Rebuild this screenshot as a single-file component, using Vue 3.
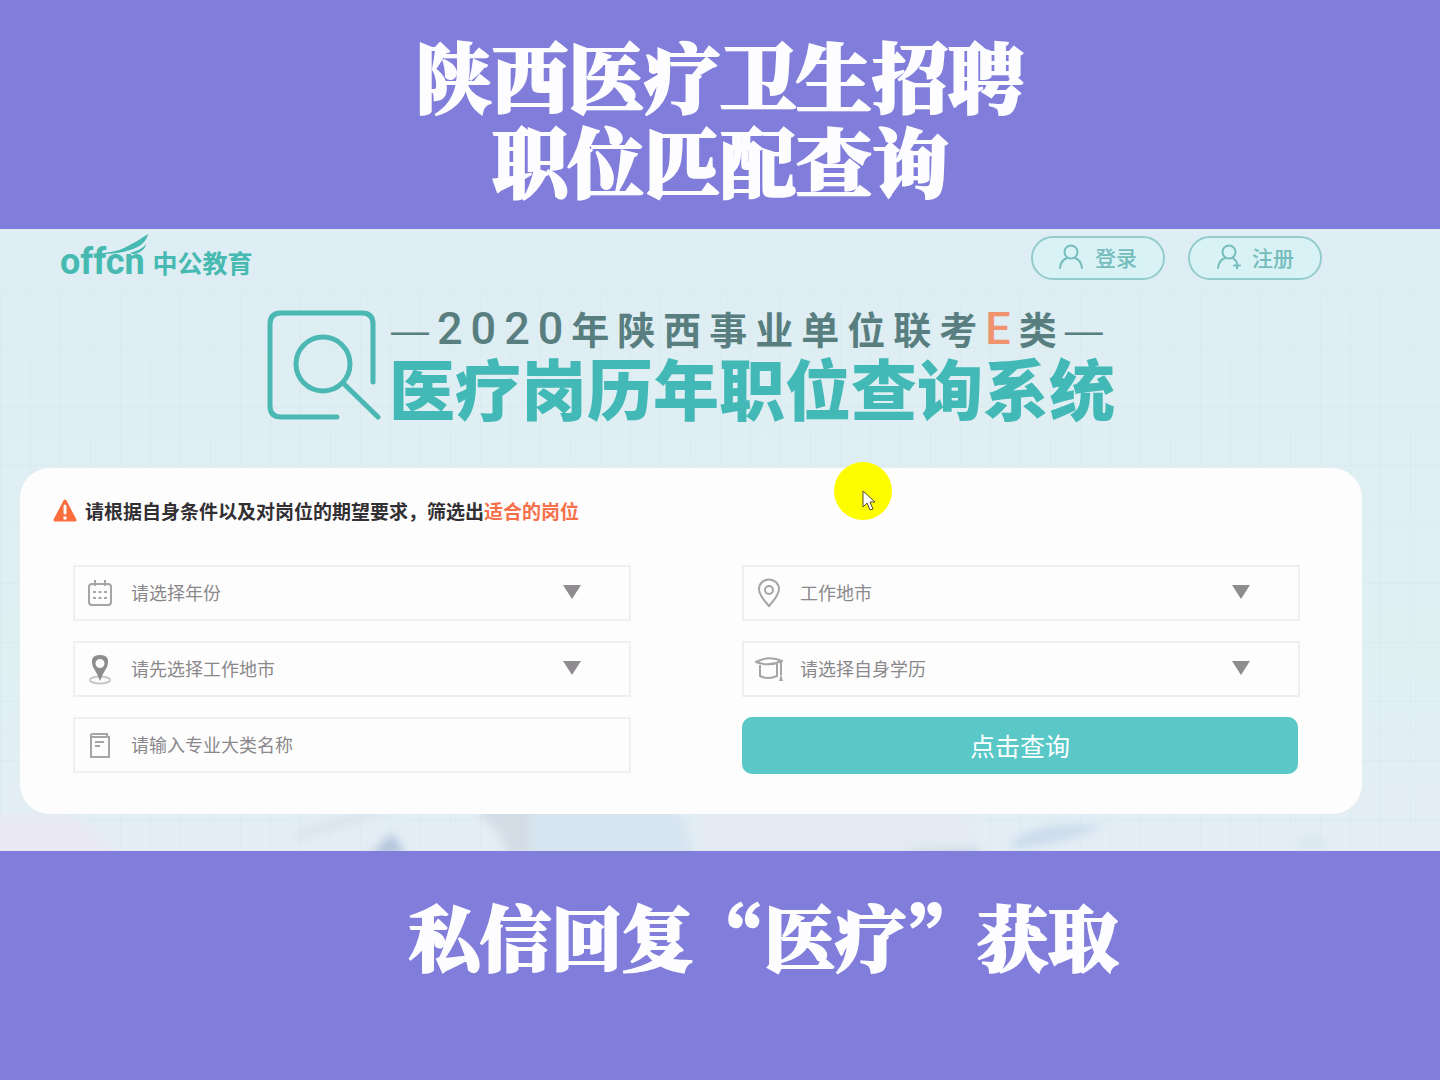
<script setup>
import { ref } from 'vue'

const year = ref('')
const city = ref('')
const area = ref('')
const degree = ref('')
const major = ref('')
</script>

<template>
  <div class="page" lang="zh-CN">
    <header class="band band-top">
      <h1>陕西医疗卫生招聘<br />职位匹配查询</h1>
    </header>

    <main class="screen">
      <svg class="scenery" viewBox="0 0 1440 160" preserveAspectRatio="none" aria-hidden="true">
        <defs>
          <filter id="soft" x="-20%" y="-40%" width="140%" height="180%"><feGaussianBlur stdDeviation="5" /></filter>
        </defs>
        <g filter="url(#soft)">
          <path d="M-20 124H70L130 170H-20z" fill="#e9e8f3" />
          <path d="M290 146Q340 120 400 120Q350 132 300 148z" fill="#d8e2ea" />
          <path d="M370 164L392 142L406 164z" fill="#b3c5dc" />
          <path d="M480 110H540V170H510Q500 135 480 126z" fill="#d3dde6" />
          <path d="M530 110H670Q690 130 694 170H530z" fill="#d7e5f1" />
          <path d="M700 110H970V170H700z" fill="#e3eaf2" />
          <path d="M1010 158Q1015 132 1105 134Q1070 152 1010 158z" fill="#cbdbec" />
          <path d="M910 160L980 157V170H910z" fill="#cbd8e8" />
          <path d="M1295 155Q1310 140 1330 155z" fill="#d2e4ea" />
        </g>
      </svg>

      <div class="topbar">
        <a class="logo" href="#" aria-label="offcn 中公教育">
          <span class="latin">offcn</span>
          <svg class="swoosh" viewBox="0 0 70 24" aria-hidden="true">
            <path d="M2 20Q32 22 46 14Q58 8 68 1Q66 12 50 17Q34 23 2 20z" fill="#46b9b1" />
            <path d="M50 20Q62 17 66 11Q65 17 58 20Q54 22 50 20z" fill="#46b9b1" />
          </svg>
          <span class="brand">中公教育</span>
        </a>
        <nav class="account">
          <button type="button">
            <svg width="26" height="26" viewBox="0 0 26 26" aria-hidden="true">
              <g fill="none" stroke="currentColor" stroke-width="2" stroke-linecap="round">
                <circle cx="12" cy="8" r="6.500" />
                <path d="M1 24Q2 16 8 14M16 14Q22 16 23 24" />
              </g>
            </svg>
            <span>登录</span>
          </button>
          <button type="button">
            <svg width="26" height="26" viewBox="0 0 26 26" aria-hidden="true">
              <g fill="none" stroke="currentColor" stroke-width="2" stroke-linecap="round">
                <circle cx="13" cy="8" r="6.500" />
                <path d="M2 24Q3 16 9 14M17 14L20 17M21 18.500V24.500M18 21.500H24" />
              </g>
            </svg>
            <span>注册</span>
          </button>
        </nav>
      </div>

      <section class="hero">
        <svg class="lens" width="114" height="110" viewBox="0 0 114 110" aria-hidden="true">
          <g fill="none" stroke="#4bb8b3" stroke-width="5" stroke-linecap="round">
            <path d="M106 72V14Q106 3 95 3H14Q3 3 3 14V96Q3 107 14 107H70" />
            <circle cx="56" cy="54" r="27" />
            <path d="M76 73L111 107" />
          </g>
        </svg>
        <div class="hero-text">
          <p><span class="dash">—</span><span class="num">2020</span>年陕西事业单位联考<span class="num accent">E</span>类<span class="dash">—</span></p>
          <h2>医疗岗历年职位查询系统</h2>
        </div>
      </section>

      <section class="card">
        <div class="notice">
          <svg width="24" height="24" viewBox="0 0 24 24" aria-hidden="true">
            <path d="M12 2L22 21H2z" fill="#fb6d3b" stroke="#fb6d3b" stroke-width="3" stroke-linejoin="round" />
            <path d="M12 7V14" stroke="#fff" stroke-width="3" stroke-linecap="round" />
            <circle cx="12" cy="19" r="1.800" fill="#fff" />
          </svg>
          <p>请根据自身条件以及对岗位的期望要求，筛选出<em>适合的岗位</em></p>
        </div>

        <form class="form" @submit.prevent>
          <div class="field">
            <svg class="icon" viewBox="0 0 28 32" aria-hidden="true">
              <g fill="none" stroke="#a6a4a6" stroke-width="2">
                <rect x="3" y="7" width="22" height="21" rx="3" />
                <path d="M9 3V9M19 3V9" />
                <path d="M7 15H21M7 21H21" stroke-dasharray="3 2.500" />
              </g>
            </svg>
            <select v-model="year" aria-label="年份">
              <option value="">请选择年份</option>
            </select>
            <svg class="arrow" viewBox="0 0 18 14" aria-hidden="true"><path d="M0 0H18L9 14z" /></svg>
          </div>

          <div class="field">
            <svg class="icon" viewBox="0 0 28 32" aria-hidden="true">
              <g fill="none" stroke="#a6a4a6" stroke-width="2">
                <path d="M14 29Q4 18 4 12A10 9.500 0 0 1 24 12Q24 18 14 29z" />
                <circle cx="14" cy="13" r="4" />
              </g>
            </svg>
            <select v-model="city" aria-label="工作地市">
              <option value="">工作地市</option>
            </select>
            <svg class="arrow" viewBox="0 0 18 14" aria-hidden="true"><path d="M0 0H18L9 14z" /></svg>
          </div>

          <div class="field">
            <svg class="icon" viewBox="0 0 28 32" aria-hidden="true">
              <ellipse cx="14" cy="27" rx="10" ry="3.500" fill="none" stroke="#c9c7c9" stroke-width="2" />
              <path fill-rule="evenodd" d="M14 28Q11 20 7 14Q3 2 14 2Q25 2 21 14Q17 20 14 28zM14 6A4.500 4.500 0 1 0 14 15A4.500 4.500 0 1 0 14 6z" fill="#8e8c8e" />
            </svg>
            <select v-model="area" aria-label="工作区县">
              <option value="">请先选择工作地市</option>
            </select>
            <svg class="arrow" viewBox="0 0 18 14" aria-hidden="true"><path d="M0 0H18L9 14z" /></svg>
          </div>

          <div class="field">
            <svg class="icon" viewBox="0 0 28 32" aria-hidden="true">
              <g fill="none" stroke="#a6a4a6" stroke-width="2" stroke-linejoin="round">
                <path d="M1 9Q14 2 27 8Q14 14 1 9zM5 12V23Q13 27 22 23V11" />
                <path d="M26 9V22" />
              </g>
              <path d="M26 21L28 28H24z" fill="#a6a4a6" />
            </svg>
            <select v-model="degree" aria-label="学历">
              <option value="">请选择自身学历</option>
            </select>
            <svg class="arrow" viewBox="0 0 18 14" aria-hidden="true"><path d="M0 0H18L9 14z" /></svg>
          </div>

          <div class="field">
            <svg class="icon" viewBox="0 0 28 32" aria-hidden="true">
              <g fill="none" stroke="#a6a4a6" stroke-width="2">
                <path d="M5 8V28H23V8H5Q4 5 7 5H21V8M9 13H18M9 17H14" />
              </g>
            </svg>
            <input v-model="major" type="text" aria-label="专业大类名称" placeholder="请输入专业大类名称" />
          </div>

          <button class="submit" type="submit">点击查询</button>
        </form>

        <div class="pointer" aria-hidden="true">
          <svg width="14" height="22" viewBox="0 0 14 22">
            <path d="M1 1V17L5 13L8 20L11 19L8 12H13z" fill="#fff" stroke="#544a2c" stroke-width="1" />
          </svg>
        </div>
      </section>
    </main>

    <footer class="band band-bottom">
      <p>私信回复“医疗”获取</p>
    </footer>
  </div>
</template>

<style>
body {
  margin: 0;
  background: #817edb;
}
</style>

<style scoped>
.page {
  min-height: 100vh;
  display: flex;
  flex-direction: column;
  background: #817edb;
  font-family: "Noto Sans CJK SC", sans-serif;
}
h1, h2, p {
  margin: 0;
}
.band {
  box-sizing: border-box;
  color: #fdfdff;
  text-align: center;
  font-family: "Noto Serif CJK SC", "Noto Sans CJK SC", sans-serif;
  font-weight: 900;
  -webkit-text-stroke: 2px #fdfdff;
}
.band-top {
  padding: 32px 0 27px;
}
.band-top h1 {
  font-size: 76px;
  line-height: 85px;
  font-weight: 900;
}
.band-bottom {
  padding: 39px 0 0 88px;
  flex: 1;
}
.band-bottom p {
  font-size: 71px;
  line-height: 88px;
}
.screen {
  position: relative;
  box-sizing: border-box;
  padding: 7px 78px 37px 20px;
  background:
    linear-gradient(#dfeef4, #dfeef400 90px),
    repeating-linear-gradient(90deg, #c5dce333 0 1px, #c5dce300 1px 30px),
    repeating-linear-gradient(#c5dce333 0 1px, #c5dce300 1px 59px),
    linear-gradient(#deedf3, #dff0f3 70%, #e4edf5);
}
.scenery {
  position: absolute;
  left: 0;
  bottom: 0;
  width: 100%;
  height: 160px;
}
.topbar {
  position: relative;
  display: flex;
  justify-content: space-between;
  align-items: center;
  height: 44px;
  padding: 0 40px;
}
.logo {
  position: relative;
  display: flex;
  align-items: center;
  gap: 8px;
  color: #46b9b1;
  text-decoration: none;
}
.latin {
  padding-top: 8px;
  font: 700 36px/44px Roboto, sans-serif;
  font-variant-ligatures: none;
}
.swoosh {
  position: absolute;
  left: 20px;
  top: 1px;
  width: 70px;
  height: 24px;
}
.brand {
  font-size: 25px;
  line-height: 44px;
  padding-top: 8px;
  font-weight: 700;
}
.account {
  display: flex;
  gap: 23px;
}
.account button {
  display: flex;
  align-items: center;
  justify-content: center;
  gap: 10px;
  width: 134px;
  height: 44px;
  padding: 0 0 2px;
  border: 2px solid #93cccd;
  border-radius: 22px;
  background: #d9f2f6;
  color: #75bcbc;
  font: 500 21px/30px "Noto Sans CJK SC", sans-serif;
}
.hero {
  position: relative;
  display: flex;
  justify-content: center;
  gap: 8px;
  margin: 30px 0 48px;
}
.lens {
  flex: none;
}
.hero-text {
  display: flex;
  flex-direction: column;
  gap: 4px;
  height: 110px;
  white-space: nowrap;
}
.hero-text p {
  padding-left: 2px;
  color: #587e7f;
  font-size: 38px;
  line-height: 36px;
  font-weight: 700;
  letter-spacing: 8px;
}
.num {
  font-family: Roboto, sans-serif;
  font-size: 45px;
  line-height: 36px;
  font-weight: 500;
}
.dash {
  font-family: "Liberation Sans", sans-serif;
  font-weight: 400;
}
.accent {
  color: #f0936f;
}
.hero-text h2 {
  color: #42b9b6;
  font-size: 66px;
  line-height: 66px;
  font-weight: 900;
}
.card {
  position: relative;
  box-sizing: border-box;
  padding: 28px 62px 40px 53px;
  border-radius: 30px;
  background: #fefdfe;
}
.notice {
  display: flex;
  align-items: center;
  gap: 8px;
  margin-left: -20px;
  color: #333033;
  font-size: 19px;
  line-height: 30px;
  font-weight: 700;
}
.notice em {
  color: #f4714b;
  font-style: normal;
}
.form {
  display: grid;
  grid-template-columns: 1fr 1fr;
  column-gap: 111px;
  row-gap: 20px;
  margin-top: 39px;
}
.field {
  position: relative;
  box-sizing: border-box;
  height: 56px;
  border: 2px solid #f0eef2;
}
.field select,
.field input {
  appearance: none;
  display: block;
  box-sizing: border-box;
  width: 100%;
  height: 100%;
  padding: 0 56px 2px;
  border: 0;
  background: transparent;
  color: #8a888a;
  font: 400 18px/26px "Noto Sans CJK SC", sans-serif;
}
.field input::placeholder {
  color: #8a888a;
  opacity: 1;
}
.icon {
  position: absolute;
  left: 11px;
  top: 10px;
  width: 28px;
  height: 32px;
}
.arrow {
  position: absolute;
  right: 48px;
  top: 18px;
  width: 18px;
  height: 14px;
  fill: #8e8c8e;
  pointer-events: none;
}
.submit {
  height: 57px;
  margin-right: 2px;
  padding: 0 0 2px;
  border: 0;
  border-radius: 10px;
  background: #59c8c7;
  color: #fff;
  font: 400 25px/36px "Noto Sans CJK SC", sans-serif;
}
.pointer {
  position: absolute;
  left: calc(61% - 5px);
  top: -6px;
  width: 58px;
  height: 58px;
  border-radius: 50%;
  background: #fdfd00;
}
.pointer svg {
  position: absolute;
  left: 28px;
  top: 28px;
}
</style>
